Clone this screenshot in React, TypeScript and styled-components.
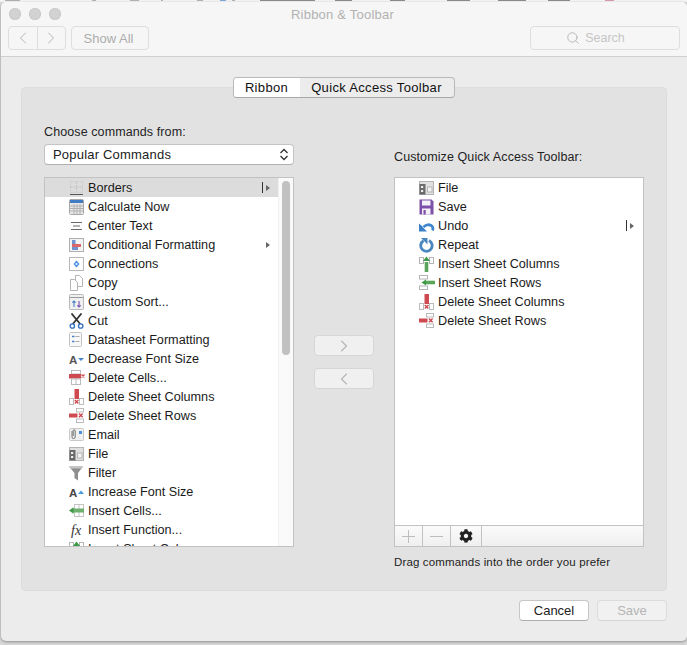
import React from "react";
import styled, { createGlobalStyle } from "styled-components";
import { ChevronLeft, ChevronRight, Search } from "lucide-react";
import { FaCog } from "react-icons/fa";

const Global = createGlobalStyle`
  html, body { margin: 0; padding: 0; background: #d9d9d9; }
  body { font-family: "Liberation Sans", Arial, sans-serif; width: 687px; height: 645px; overflow: hidden; }
`;

const Page = styled.div`
  width: 687px;
  height: 645px;
  display: flex;
  flex-direction: column;
  overflow: hidden;
`;

const Backdrop = styled.div`
  height: 2px;
  background: #f4f4f4;
  display: flex;
  flex: none;
`;

const BackdropMark = styled.span<{ $left: number; $w: number; $c: string }>`
  margin-left: ${(p) => p.$left}px;
  width: ${(p) => p.$w}px;
  height: 1px;
  background: ${(p) => p.$c};
  flex: none;
`;

const Window = styled.div`
  margin-left: 1px;
  width: 686px;
  height: 639px;
  flex: none;
  background: #ececec;
  border-radius: 5px;
  box-shadow: 0 1px 3px rgba(0, 0, 0, 0.35);
  display: flex;
  flex-direction: column;
  overflow: hidden;
`;

const TitleBar = styled.div`
  height: 54px;
  flex: none;
  background: #f6f6f6;
  border-bottom: 1px solid #d0d0d0;
  display: flex;
  flex-direction: column;
`;

const TitleRow = styled.div`
  height: 24px;
  display: grid;
  grid-template-columns: 1fr auto 1fr;
  align-items: center;
  padding: 0 8px;
`;

const Lights = styled.div`
  display: flex;
  gap: 8px;
`;

const Light = styled.span`
  width: 12px;
  height: 12px;
  border-radius: 50%;
  background: #d2d2d2;
  box-shadow: inset 0 0 0 1px #cacaca;
`;

const Title = styled.div`
  font-size: 13px;
  letter-spacing: 0.22px;
  color: #b2b2b2;
  margin-left: -3px;
`;

const ToolRow = styled.div`
  display: flex;
  align-items: center;
  padding: 0 7px 0 7px;
  gap: 5px;
  height: 24px;
`;

const GhostSurface = styled.div`
  height: 24px;
  box-sizing: border-box;
  border: 1px solid #dedede;
  border-radius: 4px;
  background: #f6f6f6;
  color: #b4b4b4;
  font-size: 13px;
  display: flex;
  align-items: center;
  justify-content: center;
`;

const NavGroup = styled(GhostSurface)`
  width: 58px;
`;

const NavCell = styled.span`
  flex: 1;
  height: 100%;
  display: flex;
  align-items: center;
  justify-content: center;
  & + & { border-left: 1px solid #dedede; }
`;

const ShowAll = styled(GhostSurface)`
  width: 78px;
  color: #adadad;
  padding-right: 3px;
`;

const SearchBox = styled(GhostSurface)`
  width: 150px;
  margin-left: auto;
  gap: 5px;
  font-size: 12.5px;
  color: #c6c6c6;
  padding-right: 19px;
  & svg { color: #a8a8a8; }
`;

const Content = styled.div`
  flex: 1;
  display: flex;
  flex-direction: column;
  padding: 20px 20px 0 20px;
`;

const Tabs = styled.div`
  position: relative;
  z-index: 1;
  align-self: center;
  margin: 0 0 -11px -1px;
  width: 222px;
  height: 21px;
  box-sizing: border-box;
  border: 1px solid #b9b9b9;
  border-bottom-color: #a8a8a8;
  border-radius: 4px;
  background: #ececec;
  display: flex;
  overflow: hidden;
  font-size: 13px;
  letter-spacing: 0.33px;
  color: #111;
`;

const Tab = styled.div<{ $active?: boolean; $w: number }>`
  width: ${(p) => p.$w}px;
  flex: none;
  display: flex;
  align-items: center;
  justify-content: center;
  background: ${(p) => (p.$active ? "#fff" : "transparent")};
`;

const Panel = styled.div`
  height: 504px;
  box-sizing: border-box;
  flex: none;
  background: #e2e2e2;
  border: 1px solid #dcdcdc;
  border-radius: 4px;
  padding: 37px 22px 0 22px;
  display: grid;
  grid-template-columns: 250px 100px 250px;
  grid-template-rows: 40px 370px auto;
  row-gap: 12px;
`;

const Head = styled.div`
  display: flex;
  flex-direction: column;
  justify-content: space-between;
  &[data-right] { justify-content: flex-end; }
`;

const Label = styled.div`
  font-size: 12.5px;
  letter-spacing: 0.1px;
  line-height: 15px;
  color: #222;
`;

const Select = styled.div`
  height: 21px;
  box-sizing: border-box;
  background: #fff;
  border: 1px solid #c4c4c4;
  border-bottom-color: #b0b0b0;
  border-radius: 4px;
  display: flex;
  align-items: center;
  justify-content: space-between;
  padding: 0 4px 0 8px;
  font-size: 13px;
  letter-spacing: 0.2px;
  color: #222;
`;

const ListBox = styled.div`
  height: 370px;
  box-sizing: border-box;
  background: #fff;
  border: 1px solid #c2c2c2;
  display: flex;
  flex-direction: column;
  overflow: hidden;
`;

const ScrollArea = styled.div`
  flex: 1;
  min-height: 0;
  display: flex;
`;

const Rows = styled.div`
  flex: 1;
  min-width: 0;
  overflow: hidden;
`;

const Row = styled.div<{ $selected?: boolean }>`
  height: 19px;
  display: flex;
  align-items: center;
  padding-left: 24px;
  font-size: 12.65px;
  color: #1a1a1a;
  white-space: nowrap;
  background: ${(p) => (p.$selected ? "#dcdcdc" : "transparent")};
`;

const IconBox = styled.span`
  width: 19px;
  flex: none;
  display: flex;
  align-items: center;
  & svg { display: block; }
`;

const RowName = styled.span`
  flex: 1;
`;

const SubMark = styled.span<{ $right: number; $split?: boolean }>`
  margin-right: ${(p) => p.$right}px;
  display: flex;
  align-items: center;
  gap: 3px;
  &::before {
    content: "";
    width: 1px;
    height: 11px;
    background: ${(p) => (p.$split ? "#333" : "transparent")};
  }
  &::after {
    content: "";
    border-left: 4px solid #666;
    border-top: 3px solid transparent;
    border-bottom: 3px solid transparent;
  }
`;

const Track = styled.div`
  width: 15px;
  flex: none;
  background: #fafafa;
  border-left: 1px solid #efefef;
  box-sizing: border-box;
  padding: 3px 3px 0 3px;
`;

const Thumb = styled.div`
  height: 174px;
  width: 8px;
  border-radius: 4px;
  background: #c1c1c1;
`;

const Middle = styled.div`
  display: flex;
  flex-direction: column;
  align-items: center;
  gap: 12px;
  padding-top: 158px;
`;

const MoveButton = styled.div`
  width: 60px;
  height: 21px;
  box-sizing: border-box;
  border: 1px solid #d6d6d6;
  border-radius: 4px;
  background: #f0f0f0;
  display: flex;
  align-items: center;
  justify-content: center;
  color: #b5b5b5;
`;

const ListFooter = styled.div`
  height: 20px;
  flex: none;
  border-top: 1px solid #c2c2c2;
  background: linear-gradient(#fbfbfb, #efefef);
  display: flex;
`;

const FooterCell = styled.span<{ $w: number }>`
  width: ${(p) => p.$w}px;
  box-sizing: border-box;
  border-right: 1px solid #c2c2c2;
  display: flex;
  align-items: center;
  justify-content: center;
  color: #222;
`;

const Hint = styled.div`
  grid-column: 3;
  margin-top: -4px;
  font-size: 11.5px;
  letter-spacing: 0.15px;
  line-height: 14px;
  color: #222;
`;

const Footer = styled.div`
  display: flex;
  justify-content: flex-end;
  gap: 8px;
  margin-top: 9px;
`;

const DialogButton = styled.div<{ $disabled?: boolean }>`
  width: 70px;
  height: 21px;
  box-sizing: border-box;
  border-radius: 4px;
  border: 1px solid ${(p) => (p.$disabled ? "#dcdcdc" : "#c6c6c6")};
  border-bottom-color: ${(p) => (p.$disabled ? "#d6d6d6" : "#aeaeae")};
  background: ${(p) => (p.$disabled ? "#f1f1f1" : "#fff")};
  color: ${(p) => (p.$disabled ? "#b5b5b5" : "#222")};
  font-size: 13px;
  display: flex;
  align-items: center;
  justify-content: center;
`;

const Ico = ({ children }: { children: React.ReactNode }) => (
  <svg width="16" height="16" viewBox="0 0 16 16" fill="none">{children}</svg>
);

const icons: Record<string, React.ReactNode> = {
  borders: (
    <Ico>
      <rect x="1.5" y="1.5" width="12" height="11" stroke="#cdcdcd" strokeDasharray="2 1" />
      <path d="M1.500 7h12M7.500 2v10" stroke="#c4c4c4" strokeDasharray="2 1" />
      <path d="M1 14.500h13" stroke="#555" />
    </Ico>
  ),
  calc: (
    <Ico>
      <rect x="0.5" y="0.5" width="14" height="15" rx="1" fill="#e8e8e8" stroke="#a8a8a8" />
      <rect x="1" y="1" width="13" height="3" fill="#3f7cc4" />
      <path d="M1 7h13M1 9.500h13M1 12h13M5 5v10M8 5v10M11 5v10" stroke="#b0b0b0" />
    </Ico>
  ),
  center: (
    <Ico>
      <path d="M2 4.500h11M4 8h7M2 11.500h11" stroke="#6a6a6a" strokeWidth="1.200" />
    </Ico>
  ),
  conditional: (
    <Ico>
      <rect x="0.500" y="1.500" width="14" height="13" fill="#f3f3f3" stroke="#b0b0b0" />
      <rect x="3" y="3" width="3.500" height="4" fill="#6f93d0" />
      <rect x="3" y="7" width="9" height="3" fill="#dd6468" />
      <rect x="3" y="10" width="6" height="3" fill="#6f93d0" />
    </Ico>
  ),
  connections: (
    <Ico>
      <rect x="0.500" y="1.500" width="14" height="13" fill="#fff" stroke="#b8b8b8" />
      <path d="M7.500 4.500l3 3.500-3 3.500-3-3.500z" fill="#4a90e2" />
      <circle cx="7.500" cy="8" r="1" fill="#fff" />
    </Ico>
  ),
  copy: (
    <Ico>
      <path d="M6.500 0.500h4l3 3v8h-7z" fill="#fff" stroke="#b4b4b4" />
      <path d="M1.500 4.500h4l3 3v8h-7z" fill="#fff" stroke="#b4b4b4" />
    </Ico>
  ),
  sort: (
    <Ico>
      <rect x="0.500" y="0.500" width="14" height="15" rx="1" fill="#f0f0f0" stroke="#b8b8b8" />
      <path d="M1 3.500h13" stroke="#999" />
      <path d="M5 13V7M3.300 8.700L5 7l1.700 1.700" stroke="#4a7fc4" strokeWidth="1.100" />
      <path d="M10 7v6M8.300 11.300L10 13l1.700-1.700" stroke="#7a52b0" strokeWidth="1.100" />
    </Ico>
  ),
  cut: (
    <Ico>
      <path d="M2.500 0.500l8.700 10.500M12.500 0.500L3.800 11" stroke="#333" strokeWidth="1.800" />
      <circle cx="3.300" cy="13" r="2.200" stroke="#2f6fc0" strokeWidth="1.300" />
      <circle cx="11.700" cy="13" r="2.200" stroke="#2f6fc0" strokeWidth="1.300" />
    </Ico>
  ),
  datasheet: (
    <Ico>
      <rect x="0.500" y="0.500" width="12" height="14" rx="1" fill="#f8f8f8" stroke="#c4c4c4" />
      <path d="M3 4.500h2.500M3 9.500h2.500" stroke="#4a7fc4" strokeWidth="1.400" />
      <path d="M6.500 4.500h4M6.500 9.500h4" stroke="#aaa" />
    </Ico>
  ),
  decFont: (
    <Ico>
      <text x="0" y="13" fontFamily="Liberation Sans, sans-serif" fontWeight="700" fontSize="11.500" fill="#555">A</text>
      <path d="M9 7h6l-3 3z" fill="#4a86c8" />
    </Ico>
  ),
  incFont: (
    <Ico>
      <text x="0" y="13" fontFamily="Liberation Sans, sans-serif" fontWeight="700" fontSize="11.500" fill="#444">A</text>
      <path d="M9 10h6l-3-3.500z" fill="#4a9ae0" />
    </Ico>
  ),
  delCells: (
    <Ico>
      <rect x="2.500" y="0.500" width="9" height="3.500" fill="#fff" stroke="#bbb" />
      <rect x="0" y="4" width="12" height="4.500" fill="#cf4a50" />
      <rect x="2.500" y="9" width="9" height="5.500" fill="#fff" stroke="#bbb" />
      <path d="M7 9v6" stroke="#bbb" />
      <path d="M12.500 4.500l3 3M15.500 4.500l-3 3" stroke="#cf4a50" strokeWidth="1.200" />
    </Ico>
  ),
  delCols: (
    <Ico>
      <rect x="0.500" y="9.500" width="4" height="6" fill="#fff" stroke="#bbb" />
      <rect x="10.500" y="9.500" width="4" height="6" fill="#fff" stroke="#bbb" />
      <rect x="5.500" y="0" width="4.500" height="10" fill="#cf4a50" />
      <path d="M5.800 11l3.600 3.600M9.400 11l-3.600 3.600" stroke="#cf4a50" strokeWidth="1.400" />
    </Ico>
  ),
  delRows: (
    <Ico>
      <rect x="7.500" y="0.500" width="7" height="3.500" fill="#fff" stroke="#bbb" />
      <rect x="7.500" y="11" width="7" height="3.500" fill="#fff" stroke="#bbb" />
      <rect x="0" y="5.500" width="8.500" height="4" fill="#cf4a50" />
      <path d="M10 5.500l3.600 3.800M13.600 5.500L10 9.300" stroke="#cf4a50" strokeWidth="1.400" />
    </Ico>
  ),
  email: (
    <Ico>
      <rect x="0.500" y="1.500" width="14" height="12" rx="1" fill="#f0f0f0" stroke="#c8c8c8" />
      <path d="M3 4v6a1.600 1.600 0 003.200 0V3.800a1 1 0 00-2 0V9" stroke="#666" strokeWidth="0.900" />
      <rect x="10" y="4" width="3" height="3" fill="#4a90e2" />
    </Ico>
  ),
  file: (
    <Ico>
      <rect x="0.500" y="1.500" width="14" height="13" fill="#e0e0e0" stroke="#b4b4b4" />
      <rect x="0.500" y="4" width="6" height="10.500" fill="#6a6a6a" />
      <rect x="2" y="6" width="2.200" height="2" fill="#eee" />
      <rect x="2" y="10" width="2.200" height="2" fill="#eee" />
      <rect x="8.500" y="7" width="4.500" height="5" fill="#f3f3f3" stroke="#b4b4b4" />
    </Ico>
  ),
  filter: (
    <Ico>
      <path d="M0 1.500h14L9 8v7.500L5.500 13V8z" fill="#8e8e8e" />
      <path d="M0 1.500h14l-1.500 2h-11z" fill="#c4c4c4" />
    </Ico>
  ),
  insCells: (
    <Ico>
      <rect x="5.500" y="1.500" width="9" height="12" fill="#fff" stroke="#c4c4c4" />
      <path d="M10 1v13" stroke="#c4c4c4" />
      <rect x="4" y="5.500" width="11" height="4" fill="#6fb06f" />
      <path d="M0 7.500l4.500-3.300v6.600z" fill="#3e9a46" />
    </Ico>
  ),
  fx: (
    <Ico>
      <text x="2" y="13" fontFamily="Liberation Serif, serif" fontStyle="italic" fontSize="14" fill="#333">fx</text>
    </Ico>
  ),
  insCols: (
    <Ico>
      <rect x="0.500" y="1.500" width="4" height="6" fill="#fff" stroke="#b4b4b4" />
      <rect x="10.500" y="1.500" width="4" height="6" fill="#fff" stroke="#b4b4b4" />
      <rect x="5.700" y="6" width="3.600" height="10" fill="#5aa55a" />
      <path d="M7.500 0.500L11 5H4z" fill="#3e9a46" />
    </Ico>
  ),
  insRows: (
    <Ico>
      <rect x="0.500" y="0.500" width="8" height="3.500" fill="#fff" stroke="#b4b4b4" />
      <rect x="0.500" y="11" width="8" height="3.500" fill="#fff" stroke="#b4b4b4" />
      <rect x="7" y="5.700" width="9" height="3.600" fill="#5aa55a" />
      <path d="M2.500 7.500L7 4.500v6z" fill="#3e9a46" />
    </Ico>
  ),
  save: (
    <Ico>
      <path d="M0.500 0.500h12l2 2v13h-14z" fill="#7c4fa8" />
      <rect x="3" y="1.500" width="8.500" height="5" fill="#f4f0f8" />
      <rect x="3" y="9.500" width="8.500" height="6" fill="#f4f0f8" />
      <rect x="4.500" y="11" width="2.200" height="4.500" fill="#7c4fa8" />
    </Ico>
  ),
  undo: (
    <Ico>
      <path d="M13.500 12.500c1.500-3.500-1.500-6.500-5.500-5.500-1.500.4-2.500 1.200-3.500 2" stroke="#3f86cf" strokeWidth="2.800" />
      <path d="M0 5.500v8h8L5 10.500 3 8z" fill="#3a7fc8" />
    </Ico>
  ),
  repeat: (
    <Ico>
      <path d="M10 3.500a5.700 5.700 0 11-5.500.2" stroke="#4a86c0" strokeWidth="2.800" />
      <path d="M2 1h6.500v6.500z" fill="#4a86c0" />
    </Ico>
  ),
};

type Item = { name: string; icon: string; selected?: boolean; sub?: "split" | "plain" };

const popular: Item[] = [
  { name: "Borders", icon: "borders", selected: true, sub: "split" },
  { name: "Calculate Now", icon: "calc" },
  { name: "Center Text", icon: "center" },
  { name: "Conditional Formatting", icon: "conditional", sub: "plain" },
  { name: "Connections", icon: "connections" },
  { name: "Copy", icon: "copy" },
  { name: "Custom Sort...", icon: "sort" },
  { name: "Cut", icon: "cut" },
  { name: "Datasheet Formatting", icon: "datasheet" },
  { name: "Decrease Font Size", icon: "decFont" },
  { name: "Delete Cells...", icon: "delCells" },
  { name: "Delete Sheet Columns", icon: "delCols" },
  { name: "Delete Sheet Rows", icon: "delRows" },
  { name: "Email", icon: "email" },
  { name: "File", icon: "file" },
  { name: "Filter", icon: "filter" },
  { name: "Increase Font Size", icon: "incFont" },
  { name: "Insert Cells...", icon: "insCells" },
  { name: "Insert Function...", icon: "fx" },
  { name: "Insert Sheet Columns", icon: "insCols" },
];

const toolbar: Item[] = [
  { name: "File", icon: "file" },
  { name: "Save", icon: "save" },
  { name: "Undo", icon: "undo", sub: "split" },
  { name: "Repeat", icon: "repeat" },
  { name: "Insert Sheet Columns", icon: "insCols" },
  { name: "Insert Sheet Rows", icon: "insRows" },
  { name: "Delete Sheet Columns", icon: "delCols" },
  { name: "Delete Sheet Rows", icon: "delRows" },
];

const marks = [
  { left: 5, w: 15, c: "#b0b0b0" },
  { left: 72, w: 4, c: "#b4b4b4" },
  { left: 34, w: 9, c: "#b4b4b4" },
  { left: 22, w: 2, c: "#b4b4b4" },
  { left: 34, w: 6, c: "#b4b4b4" },
  { left: 17, w: 6, c: "#7fa8dc" },
  { left: 6, w: 3, c: "#b4b4b4" },
  { left: 25, w: 55, c: "#8c8c8c" },
  { left: 20, w: 17, c: "#8c8c8c" },
  { left: 38, w: 15, c: "#8c8c8c" },
  { left: 42, w: 23, c: "#8c8c8c" },
  { left: 28, w: 28, c: "#8c8c8c" },
  { left: 22, w: 22, c: "#8c8c8c" },
  { left: 35, w: 9, c: "#d99aa8" },
];

const CommandRows = ({ items, markRight }: { items: Item[]; markRight: number }) => (
  <Rows>
    {items.map((it) => (
      <Row key={it.name} $selected={it.selected}>
        <IconBox>{icons[it.icon]}</IconBox>
        <RowName>{it.name}</RowName>
        {it.sub && <SubMark $right={markRight} $split={it.sub === "split"} />}
      </Row>
    ))}
  </Rows>
);

const Chooser = () => (
  <svg width="10" height="15" viewBox="0 0 10 15" fill="none" stroke="#333" strokeWidth="1.300">
    <path d="M1.500 6L5 2.500 8.500 6M1.500 9L5 12.500 8.500 9" />
  </svg>
);

export default function App() {
  return (
    <Page>
      <Global />
      <Backdrop>
        {marks.map((m, i) => (
          <BackdropMark key={i} $left={m.left} $w={m.w} $c={m.c} />
        ))}
      </Backdrop>
      <Window>
        <TitleBar>
          <TitleRow>
            <Lights>
              <Light />
              <Light />
              <Light />
            </Lights>
            <Title>Ribbon &amp; Toolbar</Title>
            <span />
          </TitleRow>
          <ToolRow>
            <NavGroup>
              <NavCell>
                <ChevronLeft size={20} strokeWidth={1.2} />
              </NavCell>
              <NavCell>
                <ChevronRight size={20} strokeWidth={1.2} />
              </NavCell>
            </NavGroup>
            <ShowAll>Show All</ShowAll>
            <SearchBox>
              <Search size={14} strokeWidth={1.3} />
              Search
            </SearchBox>
          </ToolRow>
        </TitleBar>
        <Content>
          <Tabs>
            <Tab $active $w={66}>Ribbon</Tab>
            <Tab $w={154}>Quick Access Toolbar</Tab>
          </Tabs>
          <Panel>
            <Head>
              <Label>Choose commands from:</Label>
              <Select>
                Popular Commands
                <Chooser />
              </Select>
            </Head>
            <span />
            <Head data-right>
              <Label>Customize Quick Access Toolbar:</Label>
            </Head>
            <ListBox>
              <ScrollArea>
                <CommandRows items={popular} markRight={8} />
                <Track>
                  <Thumb />
                </Track>
              </ScrollArea>
            </ListBox>
            <Middle>
              <MoveButton>
                <ChevronRight size={20} strokeWidth={1.3} />
              </MoveButton>
              <MoveButton>
                <ChevronLeft size={20} strokeWidth={1.3} />
              </MoveButton>
            </Middle>
            <ListBox>
              <ScrollArea>
                <CommandRows items={toolbar} markRight={9} />
              </ScrollArea>
              <ListFooter>
                <FooterCell $w={28}>
                  <svg width="13" height="13" viewBox="0 0 13 13" stroke="#bdbdbd"><path d="M6.500 0v13M0 6.500h13" /></svg>
                </FooterCell>
                <FooterCell $w={28}>
                  <svg width="13" height="13" viewBox="0 0 13 13" stroke="#bdbdbd"><path d="M0 6.500h13" /></svg>
                </FooterCell>
                <FooterCell $w={31}>
                  <FaCog size={14} />
                </FooterCell>
              </ListFooter>
            </ListBox>
            <Hint>Drag commands into the order you prefer</Hint>
          </Panel>
          <Footer>
            <DialogButton>Cancel</DialogButton>
            <DialogButton $disabled>Save</DialogButton>
          </Footer>
        </Content>
      </Window>
    </Page>
  );
}
